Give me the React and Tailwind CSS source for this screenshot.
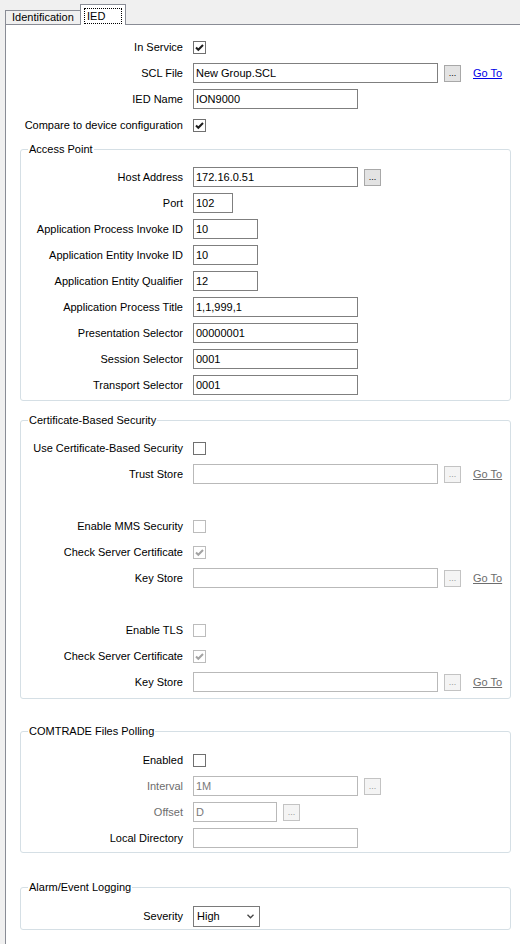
import React from "react";

// property sheet for an IED: tab strip, top-level fields and four group boxes

function Check({ checked, disabled }) {
  return (
    <div
      className={
        "w-[13px] h-[13px] border bg-white flex items-center justify-center " +
        (disabled ? "border-[#bcbcbc]" : "border-[#707070]")
      }
    >
      {checked && (
        <svg width="11" height="11" viewBox="0 0 11 11">
          <path
            d="M2 5.5 L4.3 7.8 L9 3"
            fill="none"
            stroke={disabled ? "#a3a3a3" : "#1e1e1e"}
            strokeWidth="2"
          />
        </svg>
      )}
    </div>
  );
}

function TextBox({ value, width, disabled }) {
  return (
    <div
      className={
        "h-[20px] border bg-white pl-[2px] flex items-center leading-none " +
        (disabled ? "border-[#b9b9b9] text-[#7a7a7a]" : "border-[#7f7f7f] text-black")
      }
      style={{ width }}
    >
      {value}
    </div>
  );
}

function Dots({ disabled }) {
  return (
    <div
      className={
        "ml-[6px] w-[17px] h-[17px] border flex items-end justify-center pb-[3px] text-[9px] leading-none " +
        (disabled
          ? "border-[#c3c3c3] bg-[#f4f4f4] text-[#9a9a9a]"
          : "border-[#a8a8a8] bg-[#e3e3e3] text-black")
      }
    >
      ...
    </div>
  );
}

function GoTo({ disabled }) {
  return (
    <span
      className={
        "ml-[12px] underline " + (disabled ? "text-[#6d6d6d]" : "text-[#0000e6]")
      }
    >
      Go To
    </span>
  );
}

function Row({ label, inner, dim, children }) {
  return (
    <div className="h-[26px] flex items-center">
      <div
        className={
          (inner ? "w-[172px]" : "w-[187px]") +
          " pr-[10px] text-right whitespace-nowrap " +
          (dim ? "text-[#6d6d6d]" : "text-black")
        }
      >
        {label}
      </div>
      {children}
    </div>
  );
}

function Group({ title, className, children }) {
  return (
    <fieldset
      className={
        "w-[491px] ml-[14px] border border-[#d5dfe5] rounded-[3px] " + className
      }
    >
      <legend className="ml-[7px] px-[1px] leading-[14px] text-black">{title}</legend>
      {children}
    </fieldset>
  );
}

export default function App() {
  return (
    <div className="w-[520px] h-[944px] overflow-hidden bg-[#f0f0f0] flex flex-col font-['Liberation_Sans',Arial,sans-serif] text-[11px]">
      {/* tab strip */}
      <div className="h-[24px] flex items-end pl-[5px] shrink-0">
        <div className="h-[14px] w-[75px] border-t border-l border-[#898c95] bg-[#f0f0f0] flex items-center pl-[6px] text-black">
          Identification
        </div>
        <div className="relative z-10 -mb-[1px] h-[21px] w-[46px] border-t border-l border-r border-[#898c95] bg-white p-[3px] pb-[2px]">
          <div className="h-[16px] border border-dotted border-black pl-[2px] flex items-center text-black">
            IED
          </div>
        </div>
      </div>

      {/* tab page */}
      <div className="flex-1 ml-[5px] border-l border-t border-[#898c95] bg-white pt-[9px]">
        <Row label="In Service">
          <Check checked />
        </Row>
        <Row label="SCL File">
          <TextBox value="New Group.SCL" width={245} />
          <Dots />
          <GoTo />
        </Row>
        <Row label="IED Name">
          <TextBox value="ION9000" width={165} />
        </Row>
        <Row label="Compare to device configuration">
          <Check checked />
        </Row>

        <Group title="Access Point" className="mt-[4px] pt-[8px] pb-[2px]">
          <Row inner label="Host Address">
            <TextBox value="172.16.0.51" width={165} />
            <Dots />
          </Row>
          <Row inner label="Port">
            <TextBox value="102" width={40} />
          </Row>
          <Row inner label="Application Process Invoke ID">
            <TextBox value="10" width={65} />
          </Row>
          <Row inner label="Application Entity Invoke ID">
            <TextBox value="10" width={65} />
          </Row>
          <Row inner label="Application Entity Qualifier">
            <TextBox value="12" width={65} />
          </Row>
          <Row inner label="Application Process Title">
            <TextBox value="1,1,999,1" width={165} />
          </Row>
          <Row inner label="Presentation Selector">
            <TextBox value="00000001" width={165} />
          </Row>
          <Row inner label="Session Selector">
            <TextBox value="0001" width={165} />
          </Row>
          <Row inner label="Transport Selector">
            <TextBox value="0001" width={165} />
          </Row>
        </Group>

        <Group title="Certificate-Based Security" className="mt-[12px] pt-[8px] pb-[3px]">
          <Row inner label="Use Certificate-Based Security">
            <Check />
          </Row>
          <Row inner label="Trust Store">
            <TextBox value="" width={245} disabled />
            <Dots disabled />
            <GoTo disabled />
          </Row>
          <div className="h-[26px]" />
          <Row inner label="Enable MMS Security">
            <Check disabled />
          </Row>
          <Row inner label="Check Server Certificate">
            <Check checked disabled />
          </Row>
          <Row inner label="Key Store">
            <TextBox value="" width={245} disabled />
            <Dots disabled />
            <GoTo disabled />
          </Row>
          <div className="h-[26px]" />
          <Row inner label="Enable TLS">
            <Check disabled />
          </Row>
          <Row inner label="Check Server Certificate">
            <Check checked disabled />
          </Row>
          <Row inner label="Key Store">
            <TextBox value="" width={245} disabled />
            <Dots disabled />
            <GoTo disabled />
          </Row>
        </Group>

        <Group title="COMTRADE Files Polling" className="mt-[25px] pt-[9px] pb-[1px]">
          <Row inner label="Enabled">
            <Check />
          </Row>
          <Row inner dim label="Interval">
            <TextBox value="1M" width={165} disabled />
            <Dots disabled />
          </Row>
          <Row inner dim label="Offset">
            <TextBox value="D" width={84} disabled />
            <Dots disabled />
          </Row>
          <Row inner label="Local Directory">
            <TextBox value="" width={165} disabled />
          </Row>
        </Group>

        <Group title="Alarm/Event Logging" className="mt-[27px] pt-[9px]">
          <Row inner label="Severity">
            <div className="h-[21px] w-[67px] border border-[#7a7a7a] bg-white flex items-center justify-between pl-[3px] pr-[5px] text-black">
              <span>High</span>
              <svg width="7" height="5" viewBox="0 0 7 5">
                <path d="M0.5 0.8 L3.5 3.8 L6.5 0.8" fill="none" stroke="#444" strokeWidth="1.3" />
              </svg>
            </div>
          </Row>
        </Group>
      </div>
    </div>
  );
}
